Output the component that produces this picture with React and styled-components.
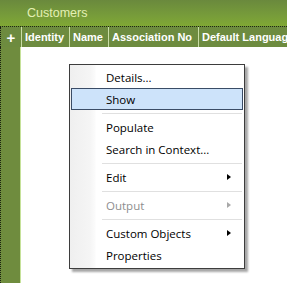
import styled, { createGlobalStyle } from "styled-components";

const Global = createGlobalStyle`
	html, body {
		margin: 0;
		padding: 0;
		background: #ffffff;
	}
	#root {
		width: 287px;
		height: 283px;
	}
`;

const Page = styled.div`
	position: relative;
	width: 287px;
	height: 283px;
	overflow: hidden;
	display: flex;
	flex-direction: column;
	font-family: "Liberation Sans", Arial, sans-serif;
`;

const TitleBar = styled.div`
	height: 26px;
	flex: none;
	display: flex;
	align-items: center;
	padding-left: 27px;
	background: linear-gradient(to bottom, #6a893d 0%, #779c3a 60%, #80a834 100%);
	color: #e4f0b4;
	font-size: 12.5px;
	border-bottom: 1px dotted #1f2a10;
`;

const Header = styled.div`
	height: 20px;
	flex: none;
	display: grid;
	grid-template-columns: 21px 48px 39px 90px 1fr;
	background: #6d8b3f;
	border-left: 1px dotted #1a2210;
	white-space: nowrap;
	overflow: hidden;
`;

const HeadCell = styled.div`
	display: flex;
	align-items: center;
	justify-content: ${(p) => (p.$center ? "center" : "flex-start")};
	padding-left: ${(p) => (p.$center ? "0" : "3px")};
	color: #ffffff;
	font-weight: bold;
	font-size: ${(p) => (p.$big ? "15px" : "11px")};
	border-right: 1px solid #c9dca6;
	overflow: hidden;
	&:last-child {
		border-right: none;
	}
`;

const Body = styled.div`
	flex: 1;
	display: flex;
`;

const Gutter = styled.div`
	width: 21px;
	box-sizing: border-box;
	background: #6f8c3e;
	border-left: 1px dotted #1a2210;
	border-right: 1px solid #c6e29a;
`;

const Content = styled.div`
	flex: 1;
	background: #ffffff;
`;

const Menu = styled.div`
	position: absolute;
	left: 69px;
	top: 64px;
	width: 174px;
	padding: 1px 0 2px;
	background: linear-gradient(to right, #efefef 0px, #f5f5f5 20px, #fbfbfb 25px, #ffffff 26px);
	border: 1px solid #3d3d3d;
	box-shadow: 3px 3px 2px rgba(0, 0, 0, 0.35);
	font-family: "Open Sans", "Noto Sans", sans-serif;
	font-size: 11.5px;
`;

const Item = styled.div`
	position: relative;
	height: 22px;
	margin: 0 1px;
	box-sizing: border-box;
	display: flex;
	align-items: center;
	padding-left: 34px;
	color: ${(p) => (p.$disabled ? "#8e8e8e" : "#000000")};
	background: ${(p) => (p.$active ? "#cde3fa" : "transparent")};
	border: 1px solid ${(p) => (p.$active ? "#3a4c66" : "transparent")};
`;

const Arrow = styled.span`
	position: absolute;
	right: 11px;
	top: 7px;
	width: 0;
	height: 0;
	border-top: 3.5px solid transparent;
	border-bottom: 3.5px solid transparent;
	border-left: 4px solid ${(p) => (p.$disabled ? "#a8a8a8" : "#000000")};
`;

const Separator = styled.div`
	height: 6px;
	display: flex;
	align-items: center;
	padding-left: 32px;
	padding-right: 2px;
	&::after {
		content: "";
		flex: 1;
		height: 1px;
		background: #e0e0e0;
		box-shadow: 0 1px 0 #ffffff;
	}
`;

const items = [
	{ label: "Details..." },
	{ label: "Show", active: true },
	"sep",
	{ label: "Populate" },
	{ label: "Search in Context..." },
	"sep",
	{ label: "Edit", sub: true },
	"sep",
	{ label: "Output", sub: true, disabled: true },
	"sep",
	{ label: "Custom Objects", sub: true },
	{ label: "Properties" },
];

export default function App() {
	return (
		<Page>
			<Global />
			<TitleBar>Customers</TitleBar>
			<Header>
				<HeadCell $center $big>+</HeadCell>
				<HeadCell>Identity</HeadCell>
				<HeadCell>Name</HeadCell>
				<HeadCell>Association No</HeadCell>
				<HeadCell>Default Language</HeadCell>
			</Header>
			<Body>
				<Gutter />
				<Content />
			</Body>
			<Menu>
				{items.map((item, index) =>
					item === "sep" ? (
						<Separator key={index} />
					) : (
						<Item key={index} $active={item.active} $disabled={item.disabled}>
							{item.label}
							{item.sub && <Arrow $disabled={item.disabled} />}
						</Item>
					)
				)}
			</Menu>
		</Page>
	);
}
